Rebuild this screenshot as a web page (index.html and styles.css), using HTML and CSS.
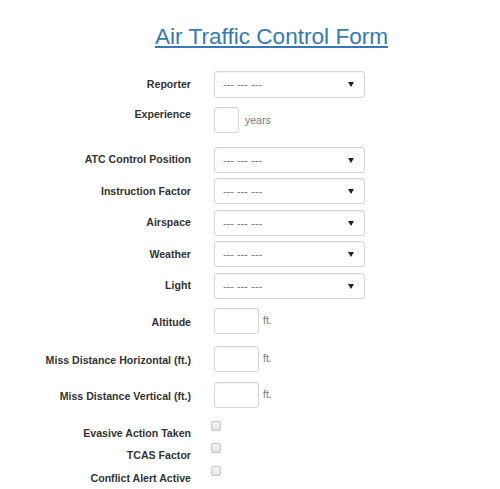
FILE: index.html
```html
<!DOCTYPE html>
<html lang="en">
<head>
    <meta charset="UTF-8">
    <meta name="viewport" content="width=device-width, initial-scale=1.0">
    <title>Air Traffic Control Form</title>
    <link rel="stylesheet" href="styles.css">
</head>
<body>
    <div class="container">
        <h1 class="title">Air Traffic Control Form</h1>
        <form class="atc-form">
            <div class="group group-top">
                <label class="label">Reporter</label>
                <div class="select-wrap">
                    <select class="select">
                        <option>--- --- ---</option>
                    </select>
                </div>
            </div>
            <div class="group group-wide">
                <label class="label label-high">Experience</label>
                <input type="text" class="input input-xs">
                <span class="unit unit-years">years</span>
            </div>
            <div class="group">
                <label class="label">ATC Control Position</label>
                <div class="select-wrap">
                    <select class="select">
                        <option>--- --- ---</option>
                    </select>
                </div>
            </div>
            <div class="group">
                <label class="label">Instruction Factor</label>
                <div class="select-wrap">
                    <select class="select">
                        <option>--- --- ---</option>
                    </select>
                </div>
            </div>
            <div class="group">
                <label class="label">Airspace</label>
                <div class="select-wrap">
                    <select class="select">
                        <option>--- --- ---</option>
                    </select>
                </div>
            </div>
            <div class="group">
                <label class="label">Weather</label>
                <div class="select-wrap">
                    <select class="select">
                        <option>--- --- ---</option>
                    </select>
                </div>
            </div>
            <div class="group group-mid">
                <label class="label">Light</label>
                <div class="select-wrap">
                    <select class="select">
                        <option>--- --- ---</option>
                    </select>
                </div>
            </div>
            <div class="group group-num">
                <label class="label label-low">Altitude</label>
                <input type="text" class="input input-sm">
                <span class="unit">ft.</span>
            </div>
            <div class="group group-num2">
                <label class="label label-low">Miss Distance Horizontal (ft.)</label>
                <input type="text" class="input input-sm">
                <span class="unit">ft.</span>
            </div>
            <div class="group group-num3">
                <label class="label label-low">Miss Distance Vertical (ft.)</label>
                <input type="text" class="input input-sm">
                <span class="unit">ft.</span>
            </div>
            <div class="check-group">
                <label class="label label-check">Evasive Action Taken</label>
                <input type="checkbox" class="check">
            </div>
            <div class="check-group">
                <label class="label label-check">TCAS Factor</label>
                <input type="checkbox" class="check">
            </div>
            <div class="check-group">
                <label class="label label-check">Conflict Alert Active</label>
                <input type="checkbox" class="check">
            </div>
        </form>
    </div>
</body>
</html>
```

FILE: styles.css
```css
body {
    font-family: 'Liberation Sans', Arial, sans-serif;
    margin: 0;
    padding: 0;
    background: #fff;
    color: #333;
}
.container {
    width: 500px;
}
.title {
    font-size: 22.6px;
    font-weight: normal;
    line-height: 24.6px;
    color: #3579b6;
    text-decoration: underline;
    text-decoration-thickness: 1.5px;
    text-underline-offset: 2px;
    margin: 25px 0 0 155px;
}
.atc-form {
    margin-top: 21px;
}
.group {
    display: flex;
    align-items: center;
    height: 26px;
    margin-bottom: 5.5px;
}
.group-top {
    height: 27px;
    margin-bottom: 9px;
}
.group-wide {
    margin-bottom: 14px;
}
.group-mid {
    margin-bottom: 9px;
}
.group-num {
    margin-bottom: 12px;
}
.group-num2 {
    margin-bottom: 10px;
}
.group-num3 {
    margin-bottom: 13px;
}
.label {
    width: 191px;
    flex-shrink: 0;
    text-align: right;
    font-size: 10.6px;
    font-weight: bold;
    line-height: 13px;
    margin-right: 23px;
    align-self: center;
}
.label-high {
    align-self: flex-start;
    padding-top: 1px;
}
.label-low {
    align-self: flex-start;
    padding-top: 8.5px;
}
.select-wrap {
    position: relative;
    width: 151px;
    height: 100%;
}
.select-wrap::after {
    content: "";
    position: absolute;
    right: 11px;
    top: 50%;
    margin-top: -2px;
    border-left: 3px solid transparent;
    border-right: 3px solid transparent;
    border-top: 5px solid #222;
}
.select {
    appearance: none;
    -webkit-appearance: none;
    width: 100%;
    height: 100%;
    box-sizing: border-box;
    border: 1px solid #d4d4d4;
    border-radius: 3px;
    background: #fff;
    box-shadow: inset 0 1px 1px rgba(0, 0, 0, 0.05);
    padding: 0 0 0 8px;
    font-family: 'Liberation Sans', Arial, sans-serif;
    font-size: 11px;
    color: #777;
}
.input {
    box-sizing: border-box;
    height: 26px;
    border: 1px solid #d4d4d4;
    border-radius: 3px;
    box-shadow: inset 0 1px 1px rgba(0, 0, 0, 0.05);
    padding: 0;
    margin: 0;
}
.input-xs {
    width: 25px;
}
.input-sm {
    width: 45px;
}
.unit {
    font-size: 10.5px;
    color: #777;
    margin-left: 4px;
    margin-top: -1px;
}
.unit-years {
    margin-left: 6px;
    margin-top: 1px;
}
.check-group {
    display: flex;
    height: 22.5px;
}
.label-check {
    align-self: flex-start;
    padding-top: 6px;
}
.check {
    appearance: none;
    -webkit-appearance: none;
    width: 10px;
    height: 10px;
    margin: 0 0 0 -3px;
    border: 1px solid #c4c4c4;
    border-radius: 2px;
    background: linear-gradient(#f4f4f4, #e4e4e4);
    box-sizing: border-box;
}
```
